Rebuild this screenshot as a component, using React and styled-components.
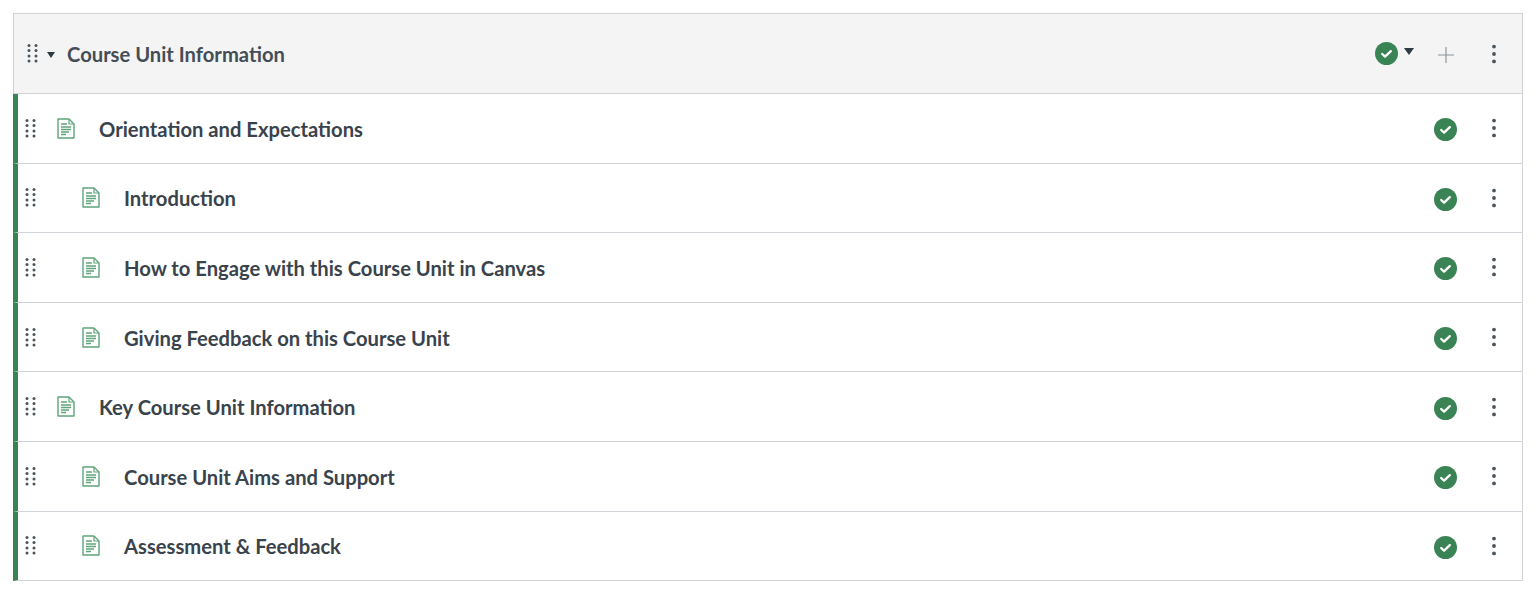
import styled, { createGlobalStyle } from "styled-components";

const rows = [
  { title: "Orientation and Expectations", indent: 0 },
  { title: "Introduction", indent: 1 },
  { title: "How to Engage with this Course Unit in Canvas", indent: 1 },
  { title: "Giving Feedback on this Course Unit", indent: 1 },
  { title: "Key Course Unit Information", indent: 0 },
  { title: "Course Unit Aims and Support", indent: 1 },
  { title: "Assessment & Feedback", indent: 1 },
];

const GlobalStyle = createGlobalStyle`
  html, body {
    margin: 0;
    background: #fff;
    font-family: "Lato", "Liberation Sans", sans-serif;
  }
`;

const Page = styled.div`
  padding: 13px;
  box-sizing: border-box;
  height: 595px;
`;

const Module = styled.div`
  border: 1px solid #cfd3d8;
  border-bottom: 0;
`;

const ModuleHeader = styled.div`
  display: flex;
  align-items: center;
  height: 79px;
  background: #f4f4f5;
  border-bottom: 1px solid #cfd3d8;
  padding-left: 13px;
  padding-right: 25px;
`;

const ModuleTitle = styled.div`
  flex: 1;
  margin-left: 12px;
  font-size: 20.2px;
  font-weight: 700;
  color: #444d55;
`;

const Row = styled.div`
  display: flex;
  align-items: center;
  height: 68.6px;
  background: #fff;
  border-bottom: 1px solid #cfd3d8;
  border-left: 5px solid #3a8354;
  margin-left: -1px;
  padding-left: 7px;
  padding-right: 25px;
`;

const PageIconWrap = styled.div`
  display: flex;
  margin-left: ${(p) => (p.$indent ? 45 : 20)}px;
`;

const RowTitle = styled.div`
  flex: 1;
  margin-left: 24px;
  margin-top: 1px;
  font-size: 20.2px;
  font-weight: 700;
  color: #39434c;
`;

const StatusIcon = styled.svg`
  display: block;
  width: 23px;
  height: 23px;
`;

const RowStatus = styled.div`
  margin-top: 3px;
`;

const Caret = styled.span`
  width: 0;
  height: 0;
  border-left: 4.5px solid transparent;
  border-right: 4.5px solid transparent;
  border-top: 6px solid #2d3b45;
`;

const HeaderCaret = styled(Caret)`
  margin-left: 8px;
  margin-top: 2px;
`;

const StatusCaret = styled(Caret)`
  margin-left: 6px;
  margin-right: 24px;
  margin-top: -4px;
  border-left-width: 5px;
  border-right-width: 5px;
  border-top-width: 7px;
`;

const RowActions = styled.div`
  display: flex;
  align-items: center;
  gap: 34px;
`;

const HeaderActions = styled.div`
  display: flex;
  align-items: center;
`;

const PlusWrap = styled.div`
  display: flex;
  margin-right: 37px;
  margin-top: 2px;
`;

const Grip = () => (
  <svg width="12" height="21" viewBox="0 0 12 21" fill="#4a545c" style={{ display: "block" }}>
    {[2.5, 7.5, 13, 18].map((y) =>
      [2, 9].map((x) => <circle key={`${x}-${y}`} cx={x} cy={y} r="1.5" />)
    )}
  </svg>
);

const PageIcon = () => (
  <svg width="18" height="21" viewBox="0 0 18 21" fill="none" style={{ display: "block" }}>
    <path d="M1 1h11l5 5v14H1z" stroke="#5fa47a" strokeWidth="1.4" strokeLinejoin="round" />
    <path d="M12 1v5h5" stroke="#5fa47a" strokeWidth="1.2" />
    <path d="M4 6h6M4 9h10M4 11.5h10M4 14h8M4 16.5h5" stroke="#5fa47a" strokeWidth="1.3" />
  </svg>
);

const Check = () => (
  <StatusIcon viewBox="0 0 24 24">
    <circle cx="12" cy="12" r="12" fill="#3a8354" />
    <path d="M7.5 12.5l3 2.8L16.5 9.5" fill="none" stroke="#fff" strokeWidth="2.4" strokeLinecap="round" strokeLinejoin="round" />
  </StatusIcon>
);

const Kebab = () => (
  <svg width="6" height="20" viewBox="0 0 6 20" fill="#4a545c" style={{ display: "block" }}>
    <circle cx="3" cy="2.6" r="1.9" />
    <circle cx="3" cy="10" r="1.9" />
    <circle cx="3" cy="17.4" r="1.9" />
  </svg>
);

const Plus = () => (
  <svg width="16" height="16" viewBox="0 0 16 16" stroke="#8b949b" strokeWidth="1.2" style={{ display: "block" }}>
    <path d="M8 0v16M0 8h16" />
  </svg>
);

export default function App() {
  return (
    <Page>
      <GlobalStyle />
      <Module>
        <ModuleHeader>
          <Grip />
          <HeaderCaret />
          <ModuleTitle>Course Unit Information</ModuleTitle>
          <HeaderActions>
            <Check />
            <StatusCaret />
            <PlusWrap>
              <Plus />
            </PlusWrap>
            <Kebab />
          </HeaderActions>
        </ModuleHeader>
        {rows.map((row) => (
          <Row key={row.title}>
            <Grip />
            <PageIconWrap $indent={row.indent}>
              <PageIcon />
            </PageIconWrap>
            <RowTitle>{row.title}</RowTitle>
            <RowActions>
              <RowStatus>
                <Check />
              </RowStatus>
              <Kebab />
            </RowActions>
          </Row>
        ))}
      </Module>
    </Page>
  );
}
